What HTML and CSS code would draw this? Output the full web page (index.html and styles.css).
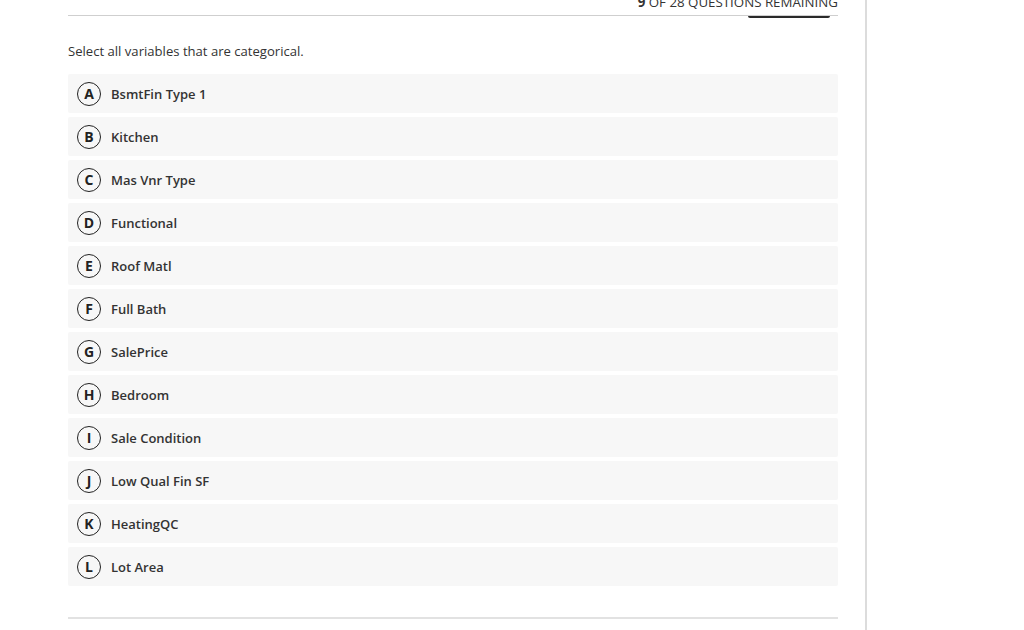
FILE: index.html
```html
<!DOCTYPE html>
<html>
<head>
<meta charset="utf-8">
<link rel="stylesheet" href="styles.css">
</head>
<body>
<div class="page">
  <main class="main">
    <header class="header">
      <div class="remaining"><b>9</b> OF 28 QUESTIONS REMAINING</div>
      <span class="btn-edge"></span>
    </header>
    <p class="question">Select all variables that are categorical.</p>
    <ul class="options">
      <li class="option"><span class="letter">A</span><span class="label">BsmtFin Type 1</span></li>
      <li class="option"><span class="letter">B</span><span class="label">Kitchen</span></li>
      <li class="option"><span class="letter">C</span><span class="label">Mas Vnr Type</span></li>
      <li class="option"><span class="letter">D</span><span class="label">Functional</span></li>
      <li class="option"><span class="letter">E</span><span class="label">Roof Matl</span></li>
      <li class="option"><span class="letter">F</span><span class="label">Full Bath</span></li>
      <li class="option"><span class="letter">G</span><span class="label">SalePrice</span></li>
      <li class="option"><span class="letter">H</span><span class="label">Bedroom</span></li>
      <li class="option"><span class="letter">I</span><span class="label">Sale Condition</span></li>
      <li class="option"><span class="letter">J</span><span class="label">Low Qual Fin SF</span></li>
      <li class="option"><span class="letter">K</span><span class="label">HeatingQC</span></li>
      <li class="option"><span class="letter">L</span><span class="label">Lot Area</span></li>
    </ul>
    <div class="footer-line"></div>
  </main>
  <aside class="side"></aside>
</div>
</body>
</html>
```

FILE: styles.css
```css
html, body {
  margin: 0;
  padding: 0;
  background: #fff;
  overflow: hidden;
}
body {
  font-family: "Open Sans", "Liberation Sans", sans-serif;
  color: #333;
}
.page {
  display: flex;
  height: 630px;
}
.main {
  box-sizing: border-box;
  width: 867px;
  height: 630px;
  padding: 0 27px 0 68px;
  border-right: 2px solid #dcdcdc;
  flex-shrink: 0;
}
.header {
  position: relative;
  height: 15px;
  border-bottom: 1px solid #cfcfcf;
  display: flex;
  justify-content: flex-end;
}
.remaining {
  margin-top: -4px;
  font-size: 13.3px;
  line-height: 13px;
  color: #333;
}
.remaining b {
  font-weight: 700;
}
.btn-edge {
  position: absolute;
  right: 8px;
  top: 16px;
  width: 82px;
  height: 2px;
  background: #2a2a2a;
  border-radius: 0 0 6px 6px;
}
.question {
  margin: 26px 0 0 0;
  font-size: 13.1px;
  line-height: 18px;
  color: #333;
}
.options {
  list-style: none;
  margin: 14px 0 0 0;
  padding: 0;
  display: flex;
  flex-direction: column;
  gap: 4px;
}
.option {
  height: 39px;
  background: #f7f7f7;
  border-radius: 2px;
  display: flex;
  align-items: center;
  padding-left: 9px;
}
.letter {
  box-sizing: border-box;
  width: 24px;
  height: 24px;
  border: 1.6px solid #222;
  border-radius: 50%;
  display: flex;
  align-items: center;
  justify-content: center;
  font-size: 14px;
  font-weight: 700;
  color: #222;
  line-height: 1;
  flex-shrink: 0;
}
.label {
  margin-left: 10px;
  font-size: 13px;
  font-weight: 600;
  color: #333;
}
.footer-line {
  margin-top: 31px;
  height: 2px;
  background: #e2e2e2;
}
.side {
  flex: 1;
}
```
